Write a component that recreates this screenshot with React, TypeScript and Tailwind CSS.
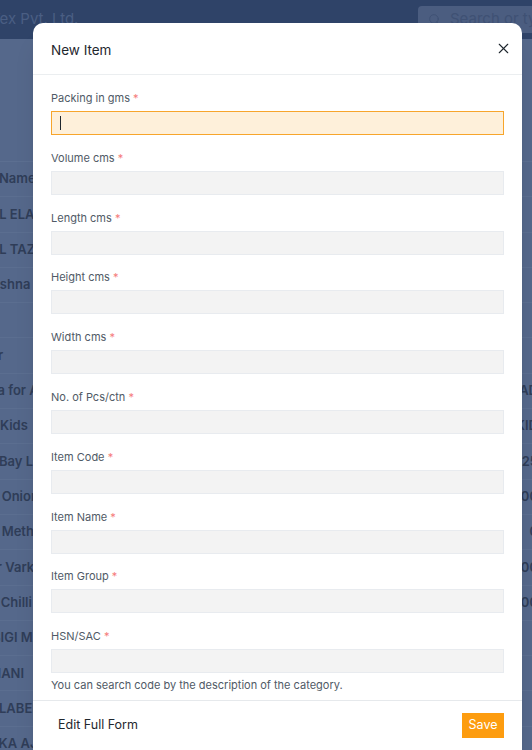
import React from 'react';
import { X, Search } from 'lucide-react';

const rows: { left: string; right?: string; ml: string }[] = [
  { left: 'Item Name', ml: 'ml-[-32px]' },
  { left: 'PETAL ELAICHI', ml: 'ml-[-34px]' },
  { left: 'PETAL TAZZA', ml: 'ml-[-34px]' },
  { left: 'Krishna Rice', ml: 'ml-[-18px]' },
  { left: '', ml: 'ml-0' },
  { left: 'Pepper', ml: 'ml-[-42px]' },
  { left: 'Masala for Aloo', right: 'AD', ml: 'ml-[-40px]' },
  { left: 'Little Kids', right: 'KID', ml: 'ml-[-34px]' },
  { left: 'Bay Leaves', ml: 'ml-[-1px]', right: '25' },
  { left: 'Dry Onion', right: '100', ml: 'ml-[-24px]' },
  { left: 'Kasuri Methi', right: '0', ml: 'ml-[-42px]' },
  { left: 'Dhar Vark', right: '100', ml: 'ml-[-28px]' },
  { left: 'Kashmiri Chilli', right: '100', ml: 'ml-[-58px]' },
  { left: 'BIGI MASALA', ml: 'ml-[-8px]' },
  { left: 'RAJHANI', ml: 'ml-[-34px]' },
  { left: 'LABEL', ml: 'ml-[-1px]' },
  { left: 'KAKA AJWAIN', ml: 'ml-[-20px]' },
];

const fields = [
  'Packing in gms',
  'Volume cms',
  'Length cms',
  'Height cms',
  'Width cms',
  'No. of Pcs/ctn',
  'Item Code',
  'Item Name',
  'Item Group',
  'HSN/SAC',
];

export default function App() {
  return (
    <div className="relative w-[532px] h-[750px] overflow-hidden bg-[#55688b] font-['Inter',sans-serif]">
      {/* page behind the dialog (already dimmed) */}
      <div className="h-[39px] bg-[#2f4368] flex items-center justify-between overflow-hidden">
        <span className="ml-[-9px] text-[15px] text-[#4a5e83] whitespace-nowrap">Tex Pvt. Ltd.</span>
        <div className="mr-[-30px] shrink-0 h-[27px] w-[144px] rounded bg-[#4b5d80] flex items-center gap-[9px] pl-[10px] text-[15px] text-[#3f5174] whitespace-nowrap overflow-hidden">
          <Search className="h-[13px] w-[13px] shrink-0" strokeWidth={1.6} />
          <span>Search or type</span>
        </div>
      </div>
      <div className="h-[123px] border-b border-[#5c6f91]" />
      <div className="flex flex-col">
        {rows.map((r, i) => (
          <div
            key={i}
            className="h-[35.3px] flex items-center justify-between border-b border-[#5b6e90] text-[13px] font-semibold text-[#2f3d58] whitespace-nowrap"
          >
            <span className={r.ml}>{r.left}</span>
            {r.right && <span className="mr-[-6px]">{r.right}</span>}
          </div>
        ))}
      </div>

      {/* dialog */}
      <div className="absolute left-[33px] top-[23px] w-[489px] bg-white rounded-t-[10px] shadow-xl">
        <div className="h-[52px] flex items-center justify-between px-[18px] border-b border-[#ebeef0]">
          <h2 className="text-[13.5px] text-[#1f272e] mt-[3px]">New Item</h2>
          <button className="mr-[-8px] mt-[-1px] text-[#1f272e]">
            <X className="h-[17px] w-[17px]" strokeWidth={1.5} />
          </button>
        </div>
        <div className="px-[18px] pt-[15px] pb-[8px] flex flex-col gap-[14.8px]">
          {fields.map((f, i) => (
            <div key={f} className="flex flex-col">
              <label className="h-[16px] leading-[16px] text-[11px] text-[#505a66] mb-[5px]">
                {f} <span className="text-[#f57a7a]">*</span>
              </label>
              {i === 0 ? (
                <div className="h-[24px] bg-[#fef0da] border border-[#f7a52b] flex items-center pl-[8px]">
                  <div className="w-px h-[14px] bg-[#1f272e]" />
                </div>
              ) : (
                <div className="h-[24px] bg-[#f3f3f3] border border-[#e8ebef]" />
              )}
              {i === fields.length - 1 && (
                <p className="mt-[5px] text-[11px] leading-[14px] text-[#505a66]">
                  You can search code by the description of the category.
                </p>
              )}
            </div>
          ))}
        </div>
        <div className="border-t border-[#e6e9ec] flex items-center justify-between px-[18px] pt-[12px] pb-[14px]">
          <button className="ml-[7px] text-[12.5px] text-[#1f272e]">Edit Full Form</button>
          <button className="h-[25px] w-[42px] bg-[#fd9c0f] text-white text-[12.5px]">Save</button>
        </div>
      </div>
    </div>
  );
}
